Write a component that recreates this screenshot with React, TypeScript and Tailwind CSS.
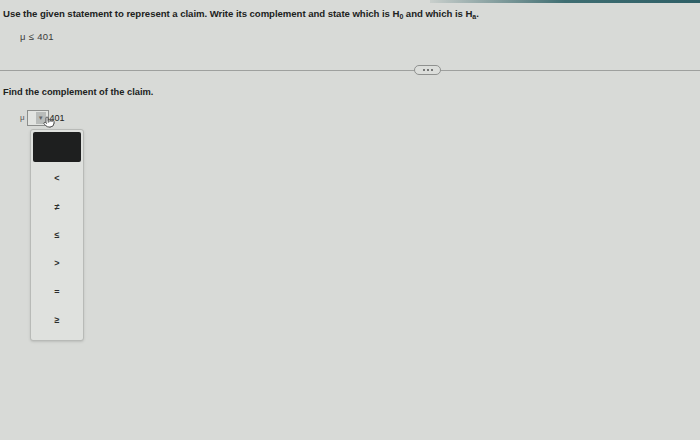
import { Pointer } from 'lucide-react';

const options = ['<', '≠', '≤', '>', '=', '≥'];

export default function App() {
    return (
        <div
            className="relative w-[700px] h-[440px] overflow-hidden bg-[#d8dad7] text-[#202221]"
            style={{ fontFamily: '"Liberation Sans", Arial, sans-serif' }}
        >
            {/* teal strip at the top edge */}
            <div className="flex justify-end h-[3px]">
                <div className="w-[270px] h-full bg-gradient-to-r from-[#c9cfcc] via-[#3f6e72] to-[#2e5f66]" />
            </div>

            <div className="px-[3px] pt-[5px]">
                <p className="text-[9.6px] leading-[12px] font-bold tracking-[-0.05px]">
                    Use the given statement to represent a claim. Write its complement and state which is H
                    <sub className="text-[7px]">0</sub> and which is H<sub className="text-[7px]">a</sub>.
                </p>
                <p className="pl-[17px] pt-[10px] text-[9.5px] text-[#3a3c3b] tracking-[0.3px]">μ ≤ 401</p>
            </div>

            {/* divider with ellipsis handle */}
            <div className="relative mt-[21px] h-[10px] flex items-center">
                <div className="w-full h-[1px] bg-[#9ea09e]" />
                <div className="absolute left-[414px] top-0 w-[27px] h-[10px] rounded-full border border-[#8f918f] bg-[#dcdedb] flex items-center justify-center gap-[2px]">
                    <span className="w-[2px] h-[2px] bg-[#555] rounded-full" />
                    <span className="w-[2px] h-[2px] bg-[#555] rounded-full" />
                    <span className="w-[2px] h-[2px] bg-[#555] rounded-full" />
                </div>
            </div>

            <div className="px-[3px] pt-[11px]">
                <p className="text-[9.3px] leading-[12px] font-bold">Find the complement of the claim.</p>

                <div className="relative pl-[17px] pt-[12px] flex items-center text-[9px]">
                    <span className="text-[#555] mr-[2px] text-[8px]">μ</span>
                    <div className="w-[22px] h-[16px] border border-[#8c8e8c] bg-[#e2e4e1] flex items-center justify-end pr-[2px]">
                        <div className="w-[10px] h-[12px] bg-[#b9bcba] flex items-center justify-center">
                            <span className="text-[6px] text-[#666]">▼</span>
                        </div>
                    </div>
                    <span className="ml-[1px]">401</span>
                    <Pointer className="absolute left-[40px] top-[18px] w-[12px] h-[12px] text-[#333] fill-white" strokeWidth={1.6} />
                </div>

                <div className="ml-[27px] mt-[3px] w-[54px] h-[212px] rounded-[3px] border border-[#b8bab7] bg-[#dfe1de] shadow-sm p-[2px] flex flex-col">
                    <div className="h-[30px] rounded-[2px] bg-[#1e1f1f]" />
                    <div className="flex-1 flex flex-col justify-around pt-[2px] pb-[4px]">
                        {options.map((o) => (
                            <div key={o} className="text-center text-[9px] font-bold text-[#2a2c2b] leading-[10px]">
                                {o}
                            </div>
                        ))}
                    </div>
                </div>
            </div>
        </div>
    );
}
